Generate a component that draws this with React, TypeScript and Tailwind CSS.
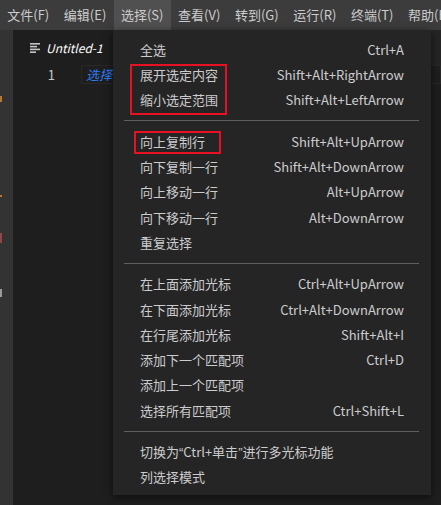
import React from "react";

const font = { fontFamily: '"Noto Sans CJK SC", "Noto Sans", sans-serif' };

const menus = ["文件(F)", "编辑(E)", "选择(S)", "查看(V)", "转到(G)", "运行(R)", "终端(T)", "帮助(H)"];

type Item = { label: React.ReactNode; key?: string } | "sep";

const q = (s: string) => <span className="font-['Liberation_Sans']">{s}</span>;

const items: Item[] = [
  { label: "全选", key: "Ctrl+A" },
  { label: "展开选定内容", key: "Shift+Alt+RightArrow" },
  { label: "缩小选定范围", key: "Shift+Alt+LeftArrow" },
  "sep",
  { label: "向上复制行", key: "Shift+Alt+UpArrow" },
  { label: "向下复制一行", key: "Shift+Alt+DownArrow" },
  { label: "向上移动一行", key: "Alt+UpArrow" },
  { label: "向下移动一行", key: "Alt+DownArrow" },
  { label: "重复选择" },
  "sep",
  { label: "在上面添加光标", key: "Ctrl+Alt+UpArrow" },
  { label: "在下面添加光标", key: "Ctrl+Alt+DownArrow" },
  { label: "在行尾添加光标", key: "Shift+Alt+I" },
  { label: "添加下一个匹配项", key: "Ctrl+D" },
  { label: "添加上一个匹配项" },
  { label: "选择所有匹配项", key: "Ctrl+Shift+L" },
  "sep",
  {
    label: (
      <>
        切换为{q("“")}Ctrl+单击{q("”")}进行多光标功能
      </>
    ),
  },
  { label: "列选择模式" },
];

function FileIcon() {
  return (
    <svg width="11" height="10" viewBox="0 0 11 10" className="shrink-0">
      <rect x="0" y="0" width="10" height="1.6" fill="#c5c5c5" />
      <rect x="0" y="2.8" width="7" height="1.6" fill="#c5c5c5" />
      <rect x="0" y="5.6" width="10" height="1.6" fill="#c5c5c5" />
      <rect x="0" y="8.4" width="6" height="1.6" fill="#c5c5c5" />
    </svg>
  );
}

export default function App() {
  return (
    <div className="relative w-[441px] h-[505px] overflow-hidden bg-[#1e1e1e] flex flex-col" style={font}>
      {/* menubar */}
      <div className="h-[30px] bg-[#3c3c3c] flex items-stretch text-[13px] text-[#cccccc] shrink-0">
        {menus.map((m) => (
          <div
            key={m}
            className={`px-[7.3px] flex items-center whitespace-nowrap ${m === "选择(S)" ? "bg-[#505050]" : ""}`}
          >
            {m}
          </div>
        ))}
      </div>

      <div className="flex flex-1">
        {/* activity bar */}
        <div className="w-[13px] bg-[#333333] relative shrink-0">
          <div className="absolute left-0 top-[66px] w-[2px] h-[6px] bg-[#b07a3a]" />
          <div className="absolute left-0 top-[165px] w-[2px] h-[2px] bg-[#b07a3a]" />
          <div className="absolute left-0 top-[203px] w-[2px] h-[10px] bg-[#8a4a4a]" />
          <div className="absolute left-0 top-[259px] w-[2px] h-[8px] bg-[#9a9a9a]" />
        </div>

        {/* editor */}
        <div className="relative flex-1 flex flex-col">
          <div className="h-[35px] bg-[#252526] flex shrink-0">
            <div className="bg-[#1e1e1e] flex items-center gap-[5px] pl-[17px] pr-[20px]">
              <FileIcon />
              <span className="italic text-[12px] text-white">Untitled-1</span>
            </div>
          </div>
          <div className="flex h-[19px] items-center">
            <div className="w-[68px] text-right pr-[26px] text-[13px] text-[#c6c6c6]">1</div>
            <div className="flex-1 h-[19px] border border-[#282828] flex items-center pl-[4px]">
              <span className="italic text-[13px] text-[#2f7df6]">选择</span>
            </div>
          </div>

          {/* dropdown menu */}
          <div className="absolute left-[100px] top-0 w-[318px] h-[465px] bg-[#252526] shadow-[0_2px_8px_rgba(0,0,0,0.6)] pt-[7px] text-[13px] text-[#cccccc]">
            {items.map((it, i) =>
              it === "sep" ? (
                <div key={i} className="h-[16px] flex items-center pl-[11px] pr-[12px]">
                  <div className="h-px w-full bg-[#5f5f5f]" />
                </div>
              ) : (
                <div key={i} className="h-[25.3px] flex items-center justify-between px-[27px] whitespace-nowrap">
                  <span>{it.label}</span>
                  {it.key && <span>{it.key}</span>}
                </div>
              )
            )}
          </div>
        </div>
      </div>

      {/* red annotation boxes */}
      <div className="absolute left-[130px] top-[64px] w-[97px] h-[51px] border-2 border-[#e81123]" />
      <div className="absolute left-[134px] top-[131px] w-[87px] h-[23px] border-2 border-[#e81123]" />
    </div>
  );
}
